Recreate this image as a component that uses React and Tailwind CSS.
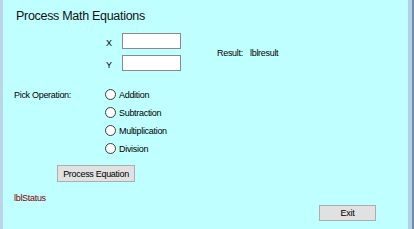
import React from "react";

const ops = ["Addition", "Subtraction", "Multiplication", "Division"];

function TextBox() {
  return <div className="w-[59px] h-[16px] bg-white border border-[#8a8a8a]" />;
}

function Radio({ label }) {
  return (
    <div className="flex items-center h-[18px] gap-[3px]">
      <div className="w-[11px] h-[11px] rounded-full bg-white border border-[#3c3c3c]" />
      <span className="pt-[1px]">{label}</span>
    </div>
  );
}

export default function App() {
  return (
    <div
      className="flex w-[414px] h-[229px] overflow-hidden bg-[#c0ffff] text-black text-[9px] tracking-[-0.3px] leading-[12px]"
      style={{ fontFamily: '"Liberation Sans", Arial, sans-serif' }}
    >
      <div className="w-[3px] shrink-0 bg-[#bcd3e8]" />

      <div className="w-[405px] shrink-0 flex flex-col">
        <div className="ml-[13px] mt-[9px] text-[12.5px] leading-[15px] text-[#111]">
          Process Math Equations
        </div>

        <div className="flex items-center mt-[9px]">
          <div className="ml-[103px] flex flex-col gap-[6px]">
            <div className="flex items-center">
              <span className="w-[16px] pt-[3px]">X</span>
              <TextBox />
            </div>
            <div className="flex items-center">
              <span className="w-[16px] pt-[3px]">Y</span>
              <TextBox />
            </div>
          </div>
          <div className="ml-[36px] flex items-center pt-[1px]">
            <span className="w-[33px]">Result:</span>
            <span>lblresult</span>
          </div>
        </div>

        <div className="flex mt-[14px]">
          <div className="ml-[11px] w-[91px] h-[18px] flex items-center pt-[1px]">
            Pick Operation:
          </div>
          <div className="flex flex-col">
            {ops.map((op) => (
              <Radio key={op} label={op} />
            ))}
          </div>
        </div>

        <button className="ml-[54px] mt-[8px] w-[78px] h-[17px] bg-[#e1e1e1] border border-[#adadad] flex items-center justify-center">
          Process Equation
        </button>

        <div className="ml-[11px] mt-[10px] h-[12px] flex items-center text-[#800000]">
          lblStatus
        </div>

        <button className="ml-[316px] mt-[1px] w-[57px] h-[16px] bg-[#e1e1e1] border border-[#adadad] flex items-center justify-center">
          Exit
        </button>
      </div>

      <div className="w-[4px] shrink-0 bg-[#b5cfe5]" />
      <div className="w-[2px] shrink-0 bg-[#6d8ea8]" />
    </div>
  );
}
